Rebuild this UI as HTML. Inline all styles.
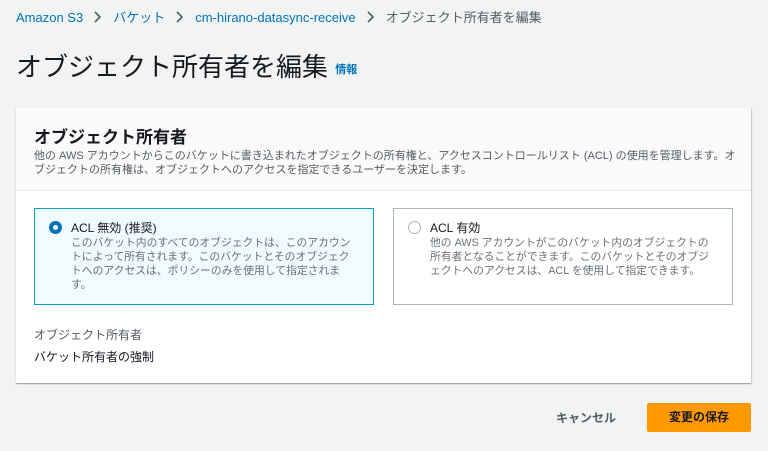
<!DOCTYPE html><html><head><meta charset="utf-8"><style>
*{margin:0;padding:0;box-sizing:border-box}
body{width:768px;height:451px;background:#f2f3f3;font-family:"Liberation Sans","Noto Sans CJK JP",sans-serif;color:#16191f;position:relative;overflow:hidden}
.a{position:absolute;white-space:nowrap}
.bc{top:7px;left:16px;font-size:13px;color:#0073bb}
.bc svg{margin:0 11px 0 11px;vertical-align:-1px}
.bc .c{color:#545b64}
.panel{position:absolute;left:16px;top:108px;width:735px;height:275px;background:#fff;box-shadow:0 1px 1px rgba(0,28,36,.3),1px 1px 1px rgba(0,28,36,.15)}
.hd{position:absolute;left:0;top:0;width:735px;height:83px;background:#fafafa;border-bottom:1px solid #eaeded}
.card{position:absolute;top:100px;width:340px;height:97px;border:1px solid #aab7b8}
.card.on{background:#f1faff;border-color:#00a1c9}
.rad{position:absolute;left:14px;top:12px;width:13px;height:13px;border-radius:50%;border:1px solid #aab7b8;background:#fff}
.on .rad{border:4px solid #0073bb}
.ct{position:absolute;left:36px;top:10px;font-size:12px;color:#16191f}
.cd{position:absolute;left:36px;top:27px;font-size:10.8px;line-height:14px;color:#687078;white-space:nowrap}
</style></head><body>
<div class="a bc">Amazon S3<svg width="8" height="12" viewBox="0 0 8 12"><path d="M1 1l5 5-5 5" fill="none" stroke="#545b64" stroke-width="1.6"/></svg>バケット<svg width="8" height="12" viewBox="0 0 8 12"><path d="M1 1l5 5-5 5" fill="none" stroke="#545b64" stroke-width="1.6"/></svg>cm-hirano-datasync-receive<svg width="8" height="12" viewBox="0 0 8 12"><path d="M1 1l5 5-5 5" fill="none" stroke="#545b64" stroke-width="1.6"/></svg><span class="c">オブジェクト所有者を編集</span></div>
<div class="a" style="top:47px;left:16px;font-size:26px;color:#16191f">オブジェクト所有者を編集 <span style="font-size:11px;color:#0073bb;font-weight:bold;vertical-align:middle">情報</span></div>
<div class="panel">
<div class="hd">
<div class="a" style="left:18px;top:15px;font-size:17px;font-weight:bold">オブジェクト所有者</div>
<div class="a" style="left:18px;top:41px;font-size:11px;line-height:14px;color:#545b64;white-space:normal;width:705px">他の AWS アカウントからこのバケットに書き込まれたオブジェクトの所有権と、アクセスコントロールリスト (ACL) の使用を管理します。オブジェクトの所有権は、オブジェクトへのアクセスを指定できるユーザーを決定します。</div>
</div>
<div class="card on" style="left:18px"><div class="rad"></div><div class="ct">ACL 無効 (推奨)</div><div class="cd">このバケット内のすべてのオブジェクトは、このアカウン<br>トによって所有されます。このバケットとそのオブジェク<br>トへのアクセスは、ポリシーのみを使用して指定されま<br>す。</div></div>
<div class="card" style="left:377px"><div class="rad"></div><div class="ct">ACL 有効</div><div class="cd">他の AWS アカウントがこのバケット内のオブジェクトの<br>所有者となることができます。このバケットとそのオブジ<br>ェクトへのアクセスは、ACL を使用して指定できます。</div></div>
<div class="a" style="left:18px;top:218px;font-size:12px;color:#545b64">オブジェクト所有者</div>
<div class="a" style="left:18px;top:240px;font-size:12px;color:#16191f">バケット所有者の強制</div>
</div>
<div class="a" style="left:556px;top:409px;font-size:12px;font-weight:bold;color:#545b64">キャンセル</div>
<div class="a" style="left:647px;top:403px;width:104px;height:29px;background:#ff9900;border-radius:2px;font-size:12px;font-weight:bold;color:#16191f;text-align:center;line-height:29px">変更の保存</div>
</body></html>
